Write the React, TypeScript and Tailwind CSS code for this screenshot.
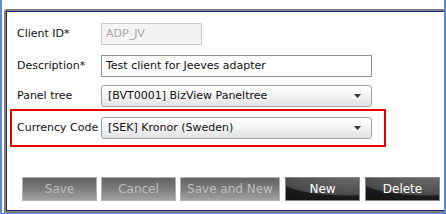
import React from "react";

const labelCls = "w-[84px] shrink-0 text-[11px] text-[#111]";

function Select({ value }: { value: string }) {
  return (
    <div className="flex h-[22px] w-[271px] items-center justify-between rounded-[3px] border border-[#9ba4ae] bg-[linear-gradient(180deg,#ffffff_0%,#f3f3f3_50%,#e2e2e2_100%)] pl-[6px] pr-[10px] text-[11px] text-[#111]">
      <span>{value}</span>
      <svg width="7" height="4" viewBox="0 0 7 4">
        <path d="M0 0 L7 0 L3.5 4 Z" fill="#333" />
      </svg>
    </div>
  );
}

function Btn({ label, width, enabled }: { label: string; width: string; enabled?: boolean }) {
  if (enabled) {
    return (
      <div
        className={`${width} flex h-[24px] shrink-0 items-center justify-center border border-[#8a8a8a] bg-[radial-gradient(ellipse_170%_140%_at_85%_0%,#6a6a6a_0%,#4a4a4a_55%,#1c1c1c_58%,#0c0c0c_100%)] text-[12px] text-white`}
      >
        {label}
      </div>
    );
  }
  return (
    <div
      className={`${width} flex h-[24px] shrink-0 items-center justify-center border border-[#b0b0b0] bg-[linear-gradient(180deg,#646464_0%,#7c7c7c_50%,#a2a2a2_100%)] text-[12px] text-[#bdbdbd]`}
    >
      {label}
    </div>
  );
}

export default function App() {
  return (
    <div className="relative h-[214px] w-[446px] overflow-hidden border-b border-l-2 border-r-2 border-[#5b8bd0] bg-white font-['DejaVu_Sans',Verdana,sans-serif]">
      <div className="ml-[2px] mt-[9px] h-[204px] w-[460px] rounded-tl-[3px] border-2 border-[#808080]">
        <div className="h-full w-full border border-[#17297a] pt-[11px]">
          {/* Client ID */}
          <div className="flex items-center pl-[10px]">
            <span className={labelCls}>Client ID*</span>
            <div className="flex h-[22px] w-[101px] items-center border border-[#cacaca] bg-[#f4f4f4] pl-[4px] text-[11px] text-[#a8a8a8]">
              ADP_JV
            </div>
          </div>

          {/* Description */}
          <div className="mt-[10px] flex items-center pl-[10px]">
            <span className={labelCls}>Description*</span>
            <div className="flex h-[22px] w-[271px] items-center border border-[#8a939c] bg-white pl-[4px] text-[11px] text-[#111]">
              Test client for Jeeves adapter
            </div>
          </div>

          {/* Panel tree */}
          <div className="mt-[8px] flex items-center pl-[10px]">
            <span className={labelCls}>Panel tree</span>
            <Select value="[BVT0001] BizView Paneltree" />
          </div>

          {/* Currency, highlighted */}
          <div className="ml-[3px] mt-[2px] flex h-[38px] w-[376px] items-center border-2 border-[#e60000] pl-[5px]">
            <span className={labelCls}>Currency Code</span>
            <Select value="[SEK] Kronor (Sweden)" />
          </div>

          {/* Buttons */}
          <div className="mt-[30px] flex pl-[15px]">
            <Btn label="Save" width="w-[75px]" />
            <div className="ml-[4px]">
              <Btn label="Cancel" width="w-[75px]" />
            </div>
            <div className="ml-[4px]">
              <Btn label="Save and New" width="w-[100px]" />
            </div>
            <div className="ml-[5px]">
              <Btn label="New" width="w-[75px]" enabled />
            </div>
            <div className="ml-[5px]">
              <Btn label="Delete" width="w-[75px]" enabled />
            </div>
          </div>
        </div>
      </div>
    </div>
  );
}
